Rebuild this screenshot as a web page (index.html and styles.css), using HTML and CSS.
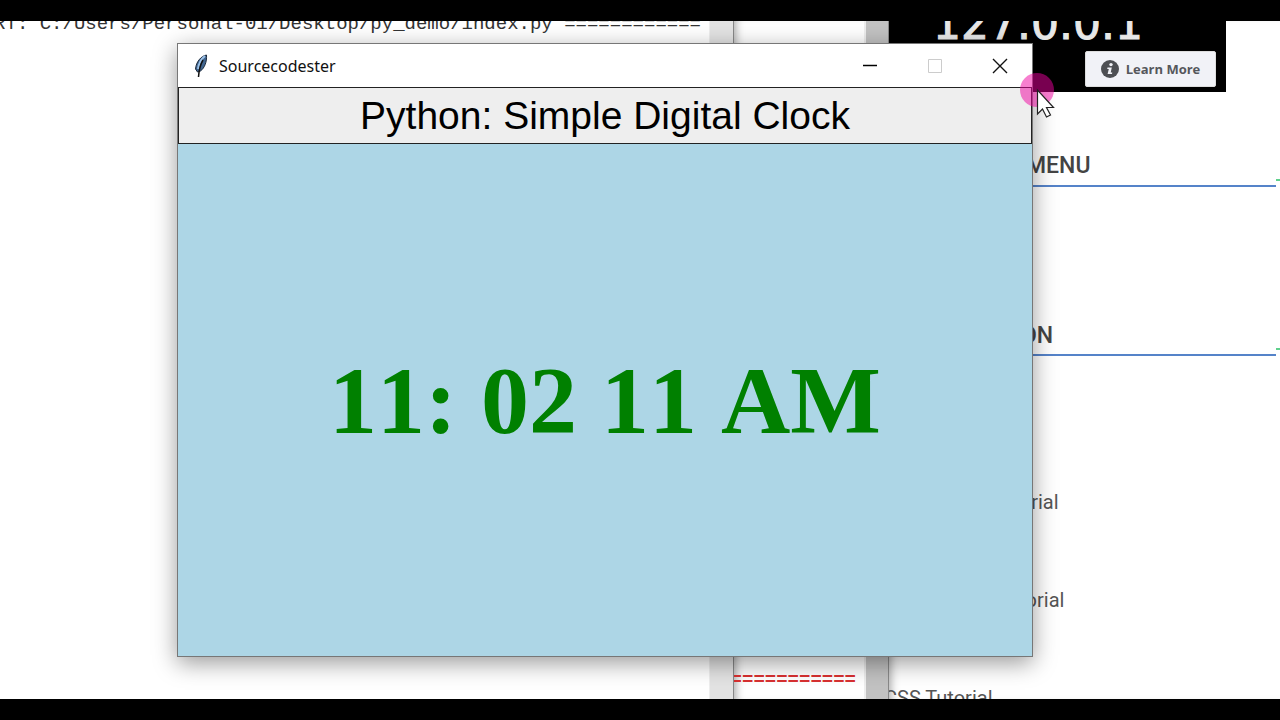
FILE: index.html
```html
<!DOCTYPE html>
<html lang="en">
<head>
  <meta charset="UTF-8">
  <meta name="viewport" content="width=device-width, initial-scale=1.0">
  <title>Sourcecodester</title>
  <link rel="stylesheet" href="styles.css">
</head>
<body>
  <main class="desktop">
    <section class="shell shell-back">
      <div class="shell-text restart">RESTART: C:/Users/Personal-01/Desktop/py_demo/index.py ============</div>
      <div class="scrollbar"></div>
    </section>
    <section class="shell shell-front">
      <div class="shell-text result">===========</div>
      <div class="scrollbar"></div>
    </section>
    <section class="browser">
      <div class="ad">
        <div class="ad-address">127.0.0.1</div>
        <button type="button" class="learn-more">
          <svg width="18" height="18" viewBox="0 0 18 18">
            <circle cx="9" cy="9" r="9" fill="#4d4f53"/>
            <circle cx="10" cy="4.6" r="1.7" fill="#f1f2f7"/>
            <path d="M6.5 7.5h4.3l-1.1 5h1.6l-.3 1.5H6.6l1.2-5H6.2z" fill="#f1f2f7"/>
          </svg>
          Learn More
        </button>
      </div>
      <h2 class="side-title menu-title">MENU</h2>
      <h2 class="side-title section-title">ON</h2>
      <ul class="tutorials">
        <li><a href="#">CodeIgniter Tutorial</a></li>
        <li><a href="#">Python Tutorial</a></li>
        <li><a href="#">Visual Basic Tutorial</a></li>
        <li><a href="#">C# Tutorial</a></li>
        <li><a href="#">CSS Tutorial</a></li>
      </ul>
    </section>

    <section class="window">
      <header class="titlebar">
        <svg class="feather" width="16" height="24" viewBox="0 0 16 24">
          <path d="M13.5 1C8 2 3 8 2.5 15l2 3 3-1c4-3 6.500-9 6-16z" fill="#40658f" stroke="#1d2b3d"/>
          <path d="M12 2C8 5 6 9 5 15" fill="none" stroke="#9dc3ea" stroke-width="2"/>
          <path d="M10 6C7 11 6 16 5.500 23" fill="none" stroke="#111" stroke-width="1.500"/>
        </svg>
        <span class="caption">Sourcecodester</span>
        <button type="button" class="window-button" aria-label="Minimize">
          <svg width="16" height="16" viewBox="0 0 16 16"><path d="M1 7.500h14" stroke="#000" stroke-width="1.500"/></svg>
        </button>
        <button type="button" class="window-button" aria-label="Maximize" disabled>
          <svg width="16" height="16" viewBox="0 0 16 16"><path d="M1.500 1.500h13v13h-13z" fill="none" stroke="#ccc"/></svg>
        </button>
        <button type="button" class="window-button" aria-label="Close">
          <svg width="16" height="16" viewBox="0 0 16 16"><path d="M1 1l14 14M15 1L1 15" stroke="#111" stroke-width="1.400"/></svg>
        </button>
      </header>
      <h1 class="heading">Python: Simple Digital Clock</h1>
      <div class="clock">11: 02 11 AM</div>
    </section>

    <svg class="pointer" width="36" height="46" viewBox="0 0 36 46">
      <circle cx="17" cy="17" r="17" fill="#f000a0" fill-opacity="0.5"/>
      <path d="M17.500 17v24l5-5 4 8 4-2-4-7.500h7z" fill="#fff" stroke="#222" stroke-width="1.200"/>
    </svg>
  </main>
</body>
</html>
```
FILE: styles.css
```css
body {
  margin: 0;
  height: 100vh;
  padding: 21px 0;
  box-sizing: border-box;
  background-color: #000;
  font-family: "Liberation Sans", Arial, sans-serif;
}

.desktop {
  position: relative;
  display: flex;
  height: 100%;
  overflow: hidden;
  background-color: #fff;
}

/* windows behind the clock */
.shell {
  display: flex;
  box-sizing: border-box;
  overflow: hidden;
  border-right: 1px solid #888;
}

.shell-back {
  flex: 1;
  min-width: 0;
}

.shell-front {
  width: 155px;
  box-shadow: inset 8px 0 8px -6px #aaa;
}

.shell-text {
  display: flex;
  flex: 1;
  justify-content: flex-end;
  min-width: 0;
  padding-right: 8px;
  font-family: "Liberation Mono", monospace;
  font-size: 19px;
  line-height: 22px;
  white-space: pre;
}

.restart {
  margin-top: -8px;
  color: #333;
}

.result {
  align-items: flex-end;
  padding-bottom: 8px;
  color: #d93030;
  font-weight: 700;
}

.scrollbar {
  width: 24px;
  background-color: #e3e3e3;
  border-left: 1px solid #eee;
  box-sizing: border-box;
}

.shell-front .scrollbar {
  background-color: #c2c2c2;
  border-left: 2px solid #eee;
}

.browser {
  width: 391px;
  overflow: hidden;
  box-shadow: inset 8px 0 8px -6px #aaa;
}

.ad {
  display: flex;
  flex-direction: column;
  align-items: flex-end;
  justify-content: flex-end;
  width: 337px;
  height: 71px;
  padding: 0 10px 5px 0;
  box-sizing: border-box;
  overflow: hidden;
  background-color: #000;
}

.ad-address {
  align-self: flex-start;
  padding-left: 44px;
  color: #e8e8e8;
  font-family: "DejaVu Sans", sans-serif;
  font-size: 44px;
  line-height: 54px;
  -webkit-text-stroke: 1px #e8e8e8;
}

.learn-more {
  display: flex;
  align-items: center;
  justify-content: center;
  flex-shrink: 0;
  gap: 7px;
  width: 131px;
  height: 36px;
  padding: 0;
  border: 1px solid #ddd;
  border-radius: 2px;
  background-color: #f1f2f7;
  color: #55575c;
  font-family: "Open Sans", sans-serif;
  font-size: 13px;
  font-weight: 700;
}

.side-title {
  position: relative;
  margin: 0 4px 0 0;
  height: 95px;
  padding-bottom: 4px;
  box-sizing: border-box;
  display: flex;
  align-items: flex-end;
  border-bottom: 2px solid #5583c9;
  color: #444;
  font-family: Roboto, sans-serif;
  font-size: 23px;
  font-weight: 500;
  line-height: 30px;
}

/* edge of the next column */
.side-title::after {
  content: "";
  position: absolute;
  right: -4px;
  bottom: 4px;
  width: 4px;
  height: 2px;
  background-color: #5fd08c;
}

.menu-title {
  padding-left: 137px;
}

.section-title {
  height: 169px;
  padding-bottom: 3px;
  padding-left: 132px;
}

.tutorials {
  margin: 122px 0 0 -5px;
  padding: 0;
  list-style: none;
  font-family: Roboto, sans-serif;
  font-size: 20px;
  line-height: 49px;
}

.tutorials a {
  color: #555;
  text-decoration: none;
}

/* clock window */
.window {
  position: absolute;
  top: 22px;
  right: 247px;
  bottom: 42px;
  left: 177px;
  display: flex;
  flex-direction: column;
  box-sizing: border-box;
  border: 1px solid #777;
  background-color: #add6e6;
  box-shadow: 0 6px 22px rgba(0, 0, 0, 0.4);
}

.titlebar {
  display: flex;
  align-items: center;
  height: 43px;
  background-color: #fff;
}

.feather {
  margin-left: 15px;
}

.caption {
  flex: 1;
  padding-left: 10px;
  color: #111;
  font-family: "Noto Sans", sans-serif;
  font-size: 16px;
}

.window-button {
  display: flex;
  align-items: center;
  justify-content: center;
  width: 65px;
  height: 43px;
  padding: 0;
  border: none;
  background-color: #fff;
}

.heading {
  margin: 0;
  border: 1px solid #222;
  background-color: #eee;
  color: #000;
  font-size: 39px;
  font-weight: 400;
  line-height: 55px;
  text-align: center;
}

.clock {
  display: flex;
  flex: 1;
  align-items: center;
  justify-content: center;
  color: green;
  font-family: "Liberation Serif", serif;
  font-size: 96px;
  font-weight: 700;
  font-kerning: none;
}

.pointer {
  position: absolute;
  top: 52px;
  right: 224px;
}
```
